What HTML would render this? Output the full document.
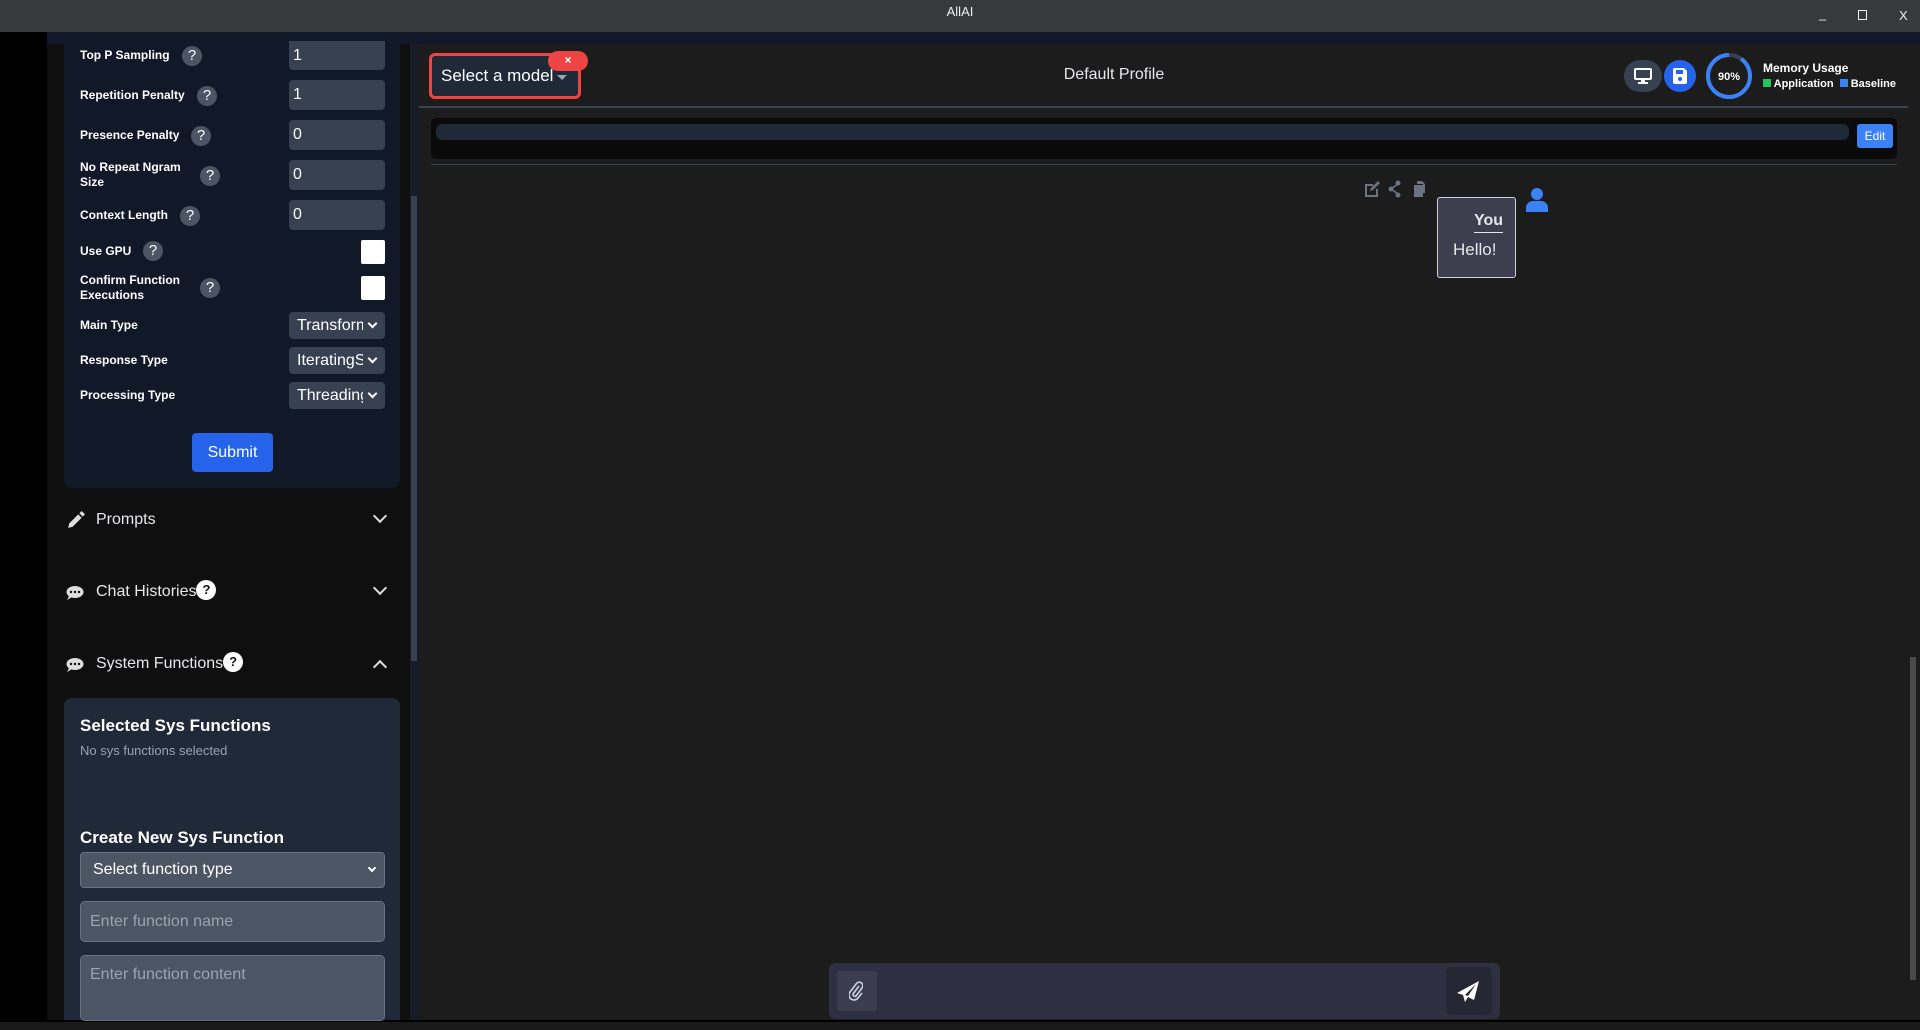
<!DOCTYPE html>
<html><head><meta charset="utf-8"><style>
*{box-sizing:border-box;margin:0;padding:0}
body{width:1920px;height:1030px;overflow:hidden;background:#000;font-family:"Liberation Sans",Arial,sans-serif;position:relative;color:#fff}
.a{position:absolute}
.lbl{position:absolute;left:80px;font-size:12px;font-weight:bold;color:#fff;line-height:15px}
.q{position:absolute;width:20px;height:20px;border-radius:50%;background:#4b5563;color:#fff;font-size:15px;text-align:center;line-height:20px}
.inp{position:absolute;left:289px;width:96px;height:30px;background:#374151;border-radius:4px;font-size:16px;padding:4px 4px;line-height:22px}
.sel{position:absolute;left:289px;width:96px;height:27px;background:#374151;border-radius:4px;font-size:16px;line-height:21px}
.sel span{position:absolute;left:8px;top:3px;width:66px;overflow:hidden;white-space:nowrap}
.sel:after{content:"";position:absolute;right:9px;top:8px;width:5px;height:5px;border-right:2px solid #fff;border-bottom:2px solid #fff;transform:rotate(45deg)}
.cb{position:absolute;left:361px;width:24px;height:24px;background:#fff;border-radius:2px}
.sec{position:absolute;left:96px;font-size:16px;color:#e5e7eb}
.chev{position:absolute;left:375px;width:10px;height:10px;border-right:2px solid #ddd;border-bottom:2px solid #ddd}
.wq{display:inline-block;width:20px;height:20px;border-radius:50%;background:#fff;color:#111;font-size:13px;font-weight:bold;text-align:center;line-height:20px;vertical-align:middle;margin-top:-3px}
</style></head><body>
<div class="a" style="left:0;top:0;width:1920px;height:32px;background:#373a3d"></div>
<div class="a" style="left:0;top:4px;width:1920px;text-align:center;font-size:13px;color:#eee">AllAI</div>
<div class="a" style="left:1819px;top:6px;font-size:13px;color:#eee">_</div>
<div class="a" style="left:1858px;top:10px;width:9px;height:10px;border:1.5px solid #eee"></div>
<div class="a" style="left:1899px;top:8px;font-size:13px;color:#eee">X</div>
<div class="a" style="left:47px;top:32px;width:1873px;height:12px;background:#111827"></div>
<div class="a" style="left:47px;top:44px;width:363px;height:976px;background:#0f0f0f"></div>
<div class="a" style="left:410px;top:44px;width:9px;height:976px;background:#161b26"></div>
<div class="a" style="left:411px;top:196px;width:6px;height:465px;background:#374151"></div>
<div class="a" style="left:64px;top:32px;width:336px;height:456px;background:#111827;border-radius:0 0 8px 8px"></div>
<div class="lbl" style="top:48px">Top P Sampling</div><div class="q" style="left:182px;top:46px">?</div><div class="inp" style="top:41px;height:29px;border-radius:0 0 4px 4px">1</div>
<div class="lbl" style="top:88px">Repetition Penalty</div><div class="q" style="left:197px;top:86px">?</div><div class="inp" style="top:80px">1</div>
<div class="lbl" style="top:128px">Presence Penalty</div><div class="q" style="left:191px;top:126px">?</div><div class="inp" style="top:120px">0</div>
<div class="lbl" style="top:160px">No Repeat Ngram<br>Size</div><div class="q" style="left:200px;top:166px">?</div><div class="inp" style="top:160px">0</div>
<div class="lbl" style="top:208px">Context Length</div><div class="q" style="left:180px;top:206px">?</div><div class="inp" style="top:200px">0</div>
<div class="lbl" style="top:244px">Use GPU</div><div class="q" style="left:143px;top:241px">?</div><div class="cb" style="top:240px"></div>
<div class="lbl" style="top:273px">Confirm Function<br>Executions</div><div class="q" style="left:200px;top:278px">?</div><div class="cb" style="top:276px"></div>
<div class="lbl" style="top:318px">Main Type</div><div class="sel" style="top:312px"><span>Transformers</span></div>
<div class="lbl" style="top:353px">Response Type</div><div class="sel" style="top:347px"><span>IteratingStream</span></div>
<div class="lbl" style="top:388px">Processing Type</div><div class="sel" style="top:382px"><span>Threading</span></div>
<div class="a" style="left:192px;top:433px;width:81px;height:39px;background:#2563eb;border-radius:4px;font-size:16px;text-align:center;line-height:39px">Submit</div>
<svg class="a" style="left:67px;top:511px" width="18" height="18" viewBox="0 0 16 16"><path d="M1 15l1-4 8-8 3 3-8 8zM11 2l2-2 3 3-2 2z" fill="#ddd"/></svg>
<div class="sec" style="top:511px">Prompts</div><div class="chev" style="top:511px;transform:rotate(45deg)"></div>
<svg class="a" style="left:66px;top:585px" width="18" height="15" viewBox="0 0 18 15"><ellipse cx="9" cy="7" rx="8.5" ry="6" fill="#ddd"/><path d="M3 11l-2 4 5-3z" fill="#ddd"/><circle cx="5" cy="7" r="1.2" fill="#0f0f0f"/><circle cx="9" cy="7" r="1.2" fill="#0f0f0f"/><circle cx="13" cy="7" r="1.2" fill="#0f0f0f"/></svg>
<div class="sec" style="top:583px">Chat Histories<span class="wq">?</span></div><div class="chev" style="top:583px;transform:rotate(45deg)"></div>
<svg class="a" style="left:66px;top:657px" width="18" height="15" viewBox="0 0 18 15"><ellipse cx="9" cy="7" rx="8.5" ry="6" fill="#ddd"/><path d="M3 11l-2 4 5-3z" fill="#ddd"/><circle cx="5" cy="7" r="1.2" fill="#0f0f0f"/><circle cx="9" cy="7" r="1.2" fill="#0f0f0f"/><circle cx="13" cy="7" r="1.2" fill="#0f0f0f"/></svg>
<div class="sec" style="top:655px">System Functions<span class="wq">?</span></div><div class="chev" style="top:662px;transform:rotate(225deg)"></div>
<div class="a" style="left:64px;top:698px;width:336px;height:322px;background:#1f2937;border-radius:8px 8px 0 0"></div>
<div class="a" style="left:80px;top:716px;font-size:17px;font-weight:bold">Selected Sys Functions</div>
<div class="a" style="left:80px;top:743px;font-size:13px;color:#9ca3af">No sys functions selected</div>
<div class="a" style="left:80px;top:828px;font-size:17px;font-weight:bold">Create New Sys Function</div>
<div class="a" style="left:80px;top:852px;width:305px;height:36px;background:#4b5563;border:1px solid #6b7280;border-radius:4px;font-size:16px;padding:8px 12px">Select function type</div>
<div class="a" style="left:369px;top:865px;width:6px;height:6px;border-right:2px solid #fff;border-bottom:2px solid #fff;transform:rotate(45deg)"></div>
<div class="a" style="left:80px;top:901px;width:305px;height:41px;background:#4b5563;border:1px solid #6b7280;border-radius:5px;font-size:16px;padding:11px 9px;color:#9ca3af">Enter function name</div>
<div class="a" style="left:80px;top:955px;width:305px;height:66px;background:#4b5563;border:1px solid #6b7280;border-radius:5px;font-size:16px;padding:10px 9px;color:#9ca3af">Enter function content</div>
<div class="a" style="left:419px;top:44px;width:1489px;height:976px;background:#1c1c1c"></div>
<div class="a" style="left:419px;top:106px;width:1489px;height:2px;background:#374151"></div>
<div class="a" style="left:429px;top:53px;width:152px;height:46px;background:#1f2937;border:3px solid #ef4444;border-radius:6px"></div>
<div class="a" style="left:441px;top:66px;font-size:17px">Select a model</div>
<div class="a" style="left:557px;top:75px;border-left:5px solid transparent;border-right:5px solid transparent;border-top:5px solid #9ca3af"></div>
<div class="a" style="left:548px;top:51px;width:40px;height:20px;background:#ef4444;border-radius:10px;font-size:12px;text-align:center;line-height:19px;font-weight:bold">×</div>
<div class="a" style="left:1014px;top:66px;width:200px;text-align:center;font-size:16px;color:#e5e7eb">Default Profile</div>
<div class="a" style="left:1624px;top:60px;width:38px;height:32px;border-radius:16px;background:#374151"></div>
<svg class="a" style="left:1634px;top:68px" width="18" height="16" viewBox="0 0 18 16"><rect x="1" y="1" width="16" height="10" rx="1" fill="none" stroke="#fff" stroke-width="2"/><rect x="7" y="11" width="4" height="3" fill="#fff"/><rect x="4" y="14" width="10" height="2" fill="#fff"/></svg>
<div class="a" style="left:1664px;top:60px;width:32px;height:32px;border-radius:16px;background:#2563eb"></div>
<svg class="a" style="left:1673px;top:68px" width="14" height="16" viewBox="0 0 14 16"><path d="M0 2a2 2 0 012-2h9l3 3v11a2 2 0 01-2 2H2a2 2 0 01-2-2z" fill="#fff"/><rect x="3" y="2" width="7" height="4" fill="#2563eb"/><circle cx="7" cy="11" r="2" fill="#2563eb"/></svg>
<svg class="a" style="left:1705px;top:52px" width="48" height="48" viewBox="0 0 48 48"><circle cx="24" cy="24" r="21" fill="none" stroke="#374151" stroke-width="4"/><circle cx="24" cy="24" r="21" fill="none" stroke="#3b82f6" stroke-width="4" stroke-dasharray="119 132" transform="rotate(-90 24 24) scale(1 -1) translate(0 -48)"/><text x="24" y="28" text-anchor="middle" font-size="11" font-weight="bold" fill="#fff" font-family="Liberation Sans">90%</text></svg>
<div class="a" style="left:1763px;top:61px;font-size:12px;font-weight:bold">Memory Usage</div>
<div class="a" style="left:1763px;top:78px;font-size:11px;font-weight:bold;white-space:nowrap"><span style="display:inline-block;width:8px;height:8px;background:#22c55e"></span> Application &nbsp;<span style="display:inline-block;width:8px;height:8px;background:#3b82f6"></span> Baseline</div>
<div class="a" style="left:431px;top:118px;width:1466px;height:41px;background:#0a0a0a;border-radius:5px"></div>
<div class="a" style="left:436px;top:124px;width:1413px;height:16px;background:#1f2937;border-radius:6px"></div>
<div class="a" style="left:1857px;top:124px;width:36px;height:24px;background:#3b82f6;border-radius:3px;font-size:12px;text-align:center;line-height:24px">Edit</div>
<div class="a" style="left:431px;top:164px;width:1466px;height:1px;background:#374151"></div>
<svg class="a" style="left:1364px;top:180px" width="66" height="18" viewBox="0 0 66 18"><g fill="#6b7280"><path d="M1 4h8v2H3v9h9V9h2v8H1z"/><path d="M6 11l1-3 7-7 2 2-7 7z"/><circle cx="27" cy="9" r="2.5"/><circle cx="34" cy="3" r="2.5"/><circle cx="34" cy="15" r="2.5"/><path d="M27 8l7-5 .8 1.4-7 5zM27 10l7 5 .8-1.4-7-5z"/><rect x="50" y="5" width="9" height="12"/><path d="M53 1h5l3 3v9h-2V4h-6z"/></g></svg>
<div class="a" style="left:1437px;top:197px;width:79px;height:81px;background:#3f3e4e;border:1px solid #d1d5db;border-radius:3px"></div>
<div class="a" style="left:1474px;top:212px;font-size:16px;font-weight:bold;color:#e5e7eb;border-bottom:1px solid #e5e7eb;padding-bottom:2px">You</div>
<div class="a" style="left:1453px;top:240px;font-size:17px;color:#e5e7eb">Hello!</div>
<svg class="a" style="left:1526px;top:188px" width="22" height="24" viewBox="0 0 22 24"><circle cx="11" cy="6" r="6" fill="#3b82f6"/><path d="M0 24v-4a7 7 0 017-7h8a7 7 0 017 7v4z" fill="#3b82f6"/></svg>
<div class="a" style="left:829px;top:963px;width:671px;height:56px;background:#2f2f42;border-radius:6px"></div>
<div class="a" style="left:837px;top:971px;width:40px;height:40px;background:#3c3c4e;border-radius:3px"></div>
<svg class="a" style="left:849px;top:981px" width="14" height="20" viewBox="0 0 14 20"><path d="M10 5L4 13a2 2 0 003 2l6-8a3.5 3.5 0 00-5.5-4.5L1 11a5 5 0 008 6l4-5" fill="none" stroke="#cbd5e1" stroke-width="1.6"/></svg>
<div class="a" style="left:1446px;top:967px;width:46px;height:48px;background:#252733;border-radius:5px"></div>
<svg class="a" style="left:1456px;top:980px" width="24" height="24" viewBox="0 0 24 24"><path d="M23 1L1 13l6 2 2 7 3-5 6 3zM9 15l11-11-8 12z" fill="#fff"/></svg>
<div class="a" style="left:1908px;top:44px;width:12px;height:976px;background:#1c1c1c"></div>
<div class="a" style="left:1910px;top:657px;width:6px;height:323px;background:#4b4b4b"></div>
<div class="a" style="left:0;top:1022px;width:1920px;height:8px;background:#1a1a1a"></div>
</body></html>
